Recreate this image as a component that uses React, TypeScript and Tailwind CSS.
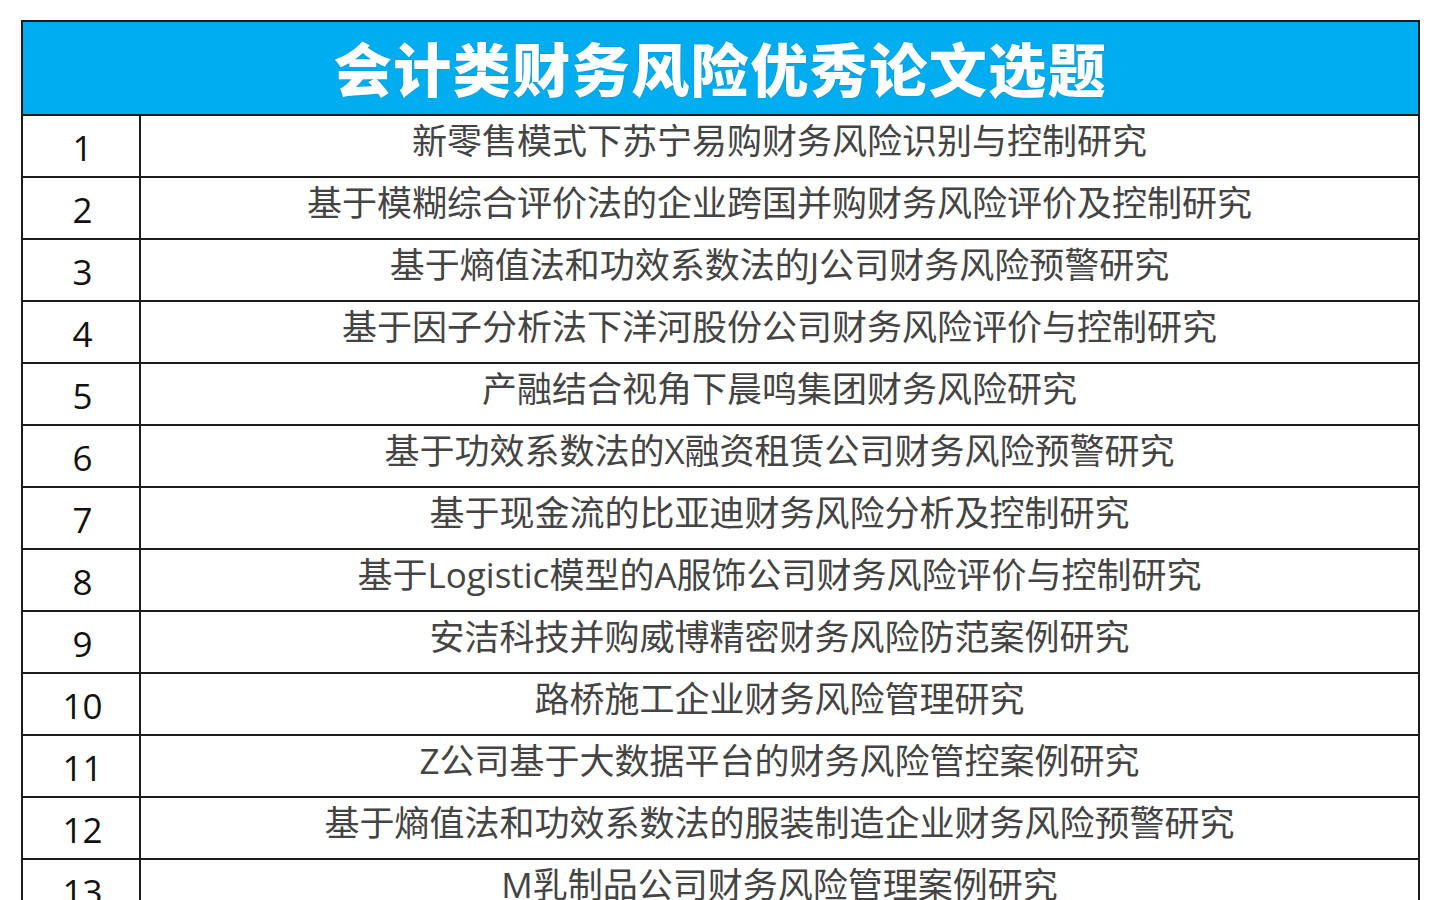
const rows = [
  "新零售模式下苏宁易购财务风险识别与控制研究",
  "基于模糊综合评价法的企业跨国并购财务风险评价及控制研究",
  "基于熵值法和功效系数法的J公司财务风险预警研究",
  "基于因子分析法下洋河股份公司财务风险评价与控制研究",
  "产融结合视角下晨鸣集团财务风险研究",
  "基于功效系数法的X融资租赁公司财务风险预警研究",
  "基于现金流的比亚迪财务风险分析及控制研究",
  "基于Logistic模型的A服饰公司财务风险评价与控制研究",
  "安洁科技并购威博精密财务风险防范案例研究",
  "路桥施工企业财务风险管理研究",
  "Z公司基于大数据平台的财务风险管控案例研究",
  "基于熵值法和功效系数法的服装制造企业财务风险预警研究",
  "M乳制品公司财务风险管理案例研究",
];

export default function App() {
  return (
    <div className="h-[900px] w-[1440px] overflow-hidden bg-white pt-[20px] pl-[21px]">
      <div className="w-[1399px] border-x-2 border-t-2 border-[#1c1c1c]">
        <div className="flex h-[94px] items-center justify-center border-b-2 border-[#1c1c1c] bg-[#00aeef]">
          <h1
            className="pb-[2px] text-[58px] font-black leading-none tracking-[1.5px] text-white [text-shadow:0_0_2px_rgba(0,60,100,0.35)]"
            style={{ fontFamily: '"Noto Sans CJK SC", sans-serif' }}
          >
            会计类财务风险优秀论文选题
          </h1>
        </div>
        {rows.map((title, i) => (
          <div key={i} className="flex h-[62px] border-b-2 border-[#1c1c1c]">
            <div
              className="flex w-[118px] shrink-0 items-center justify-center border-r-2 border-[#1c1c1c] pt-[2px] pl-[3px] text-[35px] leading-none text-[#111]"
              style={{ fontFamily: '"Open Sans", sans-serif' }}
            >
              {i + 1}
            </div>
            <div
              className="flex flex-1 items-center justify-center pb-[12px] text-[35px] leading-none text-[#444]"
              style={{ fontFamily: '"Open Sans", "Noto Sans CJK SC", sans-serif' }}
            >
              {title}
            </div>
          </div>
        ))}
      </div>
    </div>
  );
}
